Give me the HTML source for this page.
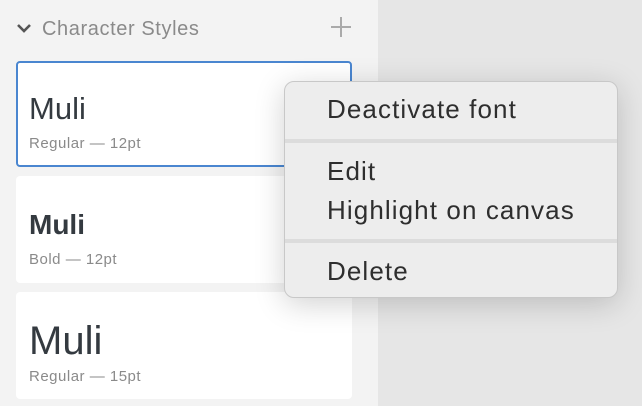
<!DOCTYPE html>
<html><head><style>
body{margin:0;width:642px;height:406px;background:#e6e6e6;font-family:"Liberation Sans",sans-serif;position:relative;overflow:hidden}
.side{position:absolute;left:0;top:0;width:378px;height:406px;background:#f3f3f3}
.card{position:absolute;left:16px;width:336px;background:#fff;border-radius:4px;box-sizing:border-box}
.t{position:absolute;left:29px;color:#343a40;white-space:nowrap;line-height:1}
.s{position:absolute;left:29px;color:#8a8a8a;font-size:15px;letter-spacing:0.5px;white-space:nowrap;line-height:1}
.menu{position:absolute;left:284px;top:81px;width:334px;height:217px;background:#ededed;border:1px solid #c8c8c8;border-radius:10px;box-sizing:border-box;box-shadow:0 6px 30px rgba(0,0,0,.18)}
.mi{position:absolute;left:42px;font-size:26px;letter-spacing:1.1px;color:#2e2e2e;white-space:nowrap;line-height:1}
.sep{position:absolute;left:0;right:0;height:4px;background:#dcdcdc}
</style></head><body>
<div class="side">
<svg style="position:absolute;left:16px;top:22px" width="16" height="12"><path d="M2 3 L8 9 L14 3" stroke="#555" stroke-width="2.6" fill="none"/></svg>
<div style="position:absolute;left:42px;top:18px;font-size:20px;letter-spacing:0.6px;color:#8a8a8a">Character Styles</div>
<svg style="position:absolute;left:330px;top:16px" width="22" height="22"><path d="M11 1V21M1 11H21" stroke="#aaa" stroke-width="2"/></svg>
<div class="card" style="top:61px;height:106px;border:2px solid #4a86d0"></div>
<div class="t" style="top:93px;font-size:31px">Muli</div>
<div class="s" style="top:136px">Regular — 12pt</div>
<div class="card" style="top:176px;height:107px"></div>
<div class="t" style="top:211px;font-size:28px;font-weight:bold">Muli</div>
<div class="s" style="top:252px">Bold — 12pt</div>
<div class="card" style="top:292px;height:107px"></div>
<div class="t" style="top:321px;font-size:40px">Muli</div>
<div class="s" style="top:369px">Regular — 15pt</div>
</div>
<div class="menu">
<div class="mi" style="top:14px">Deactivate font</div>
<div class="sep" style="top:57px"></div>
<div class="mi" style="top:76px">Edit</div>
<div class="mi" style="top:115px">Highlight on canvas</div>
<div class="sep" style="top:157px"></div>
<div class="mi" style="top:176px">Delete</div>
</div>
</body></html>
